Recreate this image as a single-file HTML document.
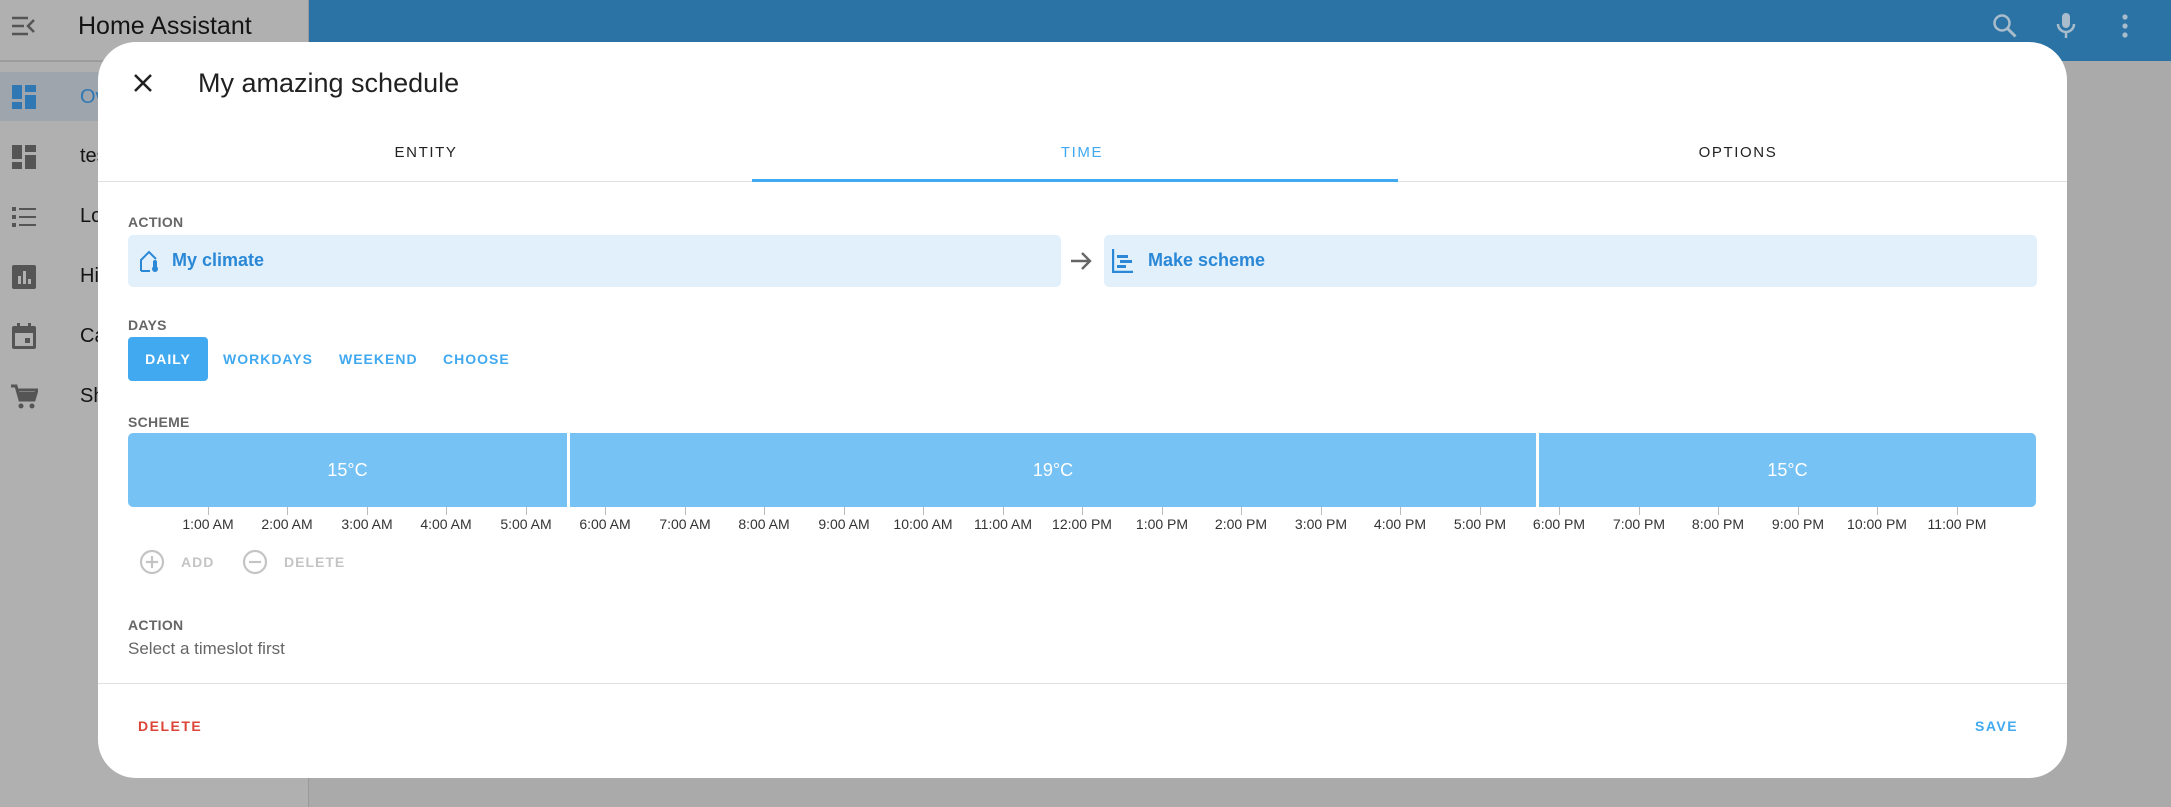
<!DOCTYPE html>
<html><head><meta charset="utf-8"><style>
*{box-sizing:border-box;margin:0;padding:0}
body{width:2171px;height:807px;overflow:hidden;position:relative;background:#aaaaaa;font-family:"Liberation Sans",sans-serif}
.abs{position:absolute}
.side{left:0;top:0;width:309px;height:807px;background:#b0b0b0;border-right:1px solid #9a9a9a}
.top{left:309px;top:0;width:1862px;height:61px;background:#2b73a5}
.item{position:absolute;left:80px;font-size:20px;color:#141414}
.dlg{left:98px;top:42px;width:1969px;height:736px;background:#fff;border-radius:38px;overflow:hidden}
.lbl{position:absolute;left:30px;font-size:14px;font-weight:bold;color:#666;letter-spacing:.3px}
.tab{position:absolute;top:102px;width:656px;text-align:center;font-size:15px;letter-spacing:1.6px;color:#222}
.box{position:absolute;top:193px;height:52px;background:#e1f0fb;border-radius:5px;color:#2a88d6;font-size:18px;font-weight:bold}
.btn{position:absolute;top:295px;height:44px;line-height:44px;font-size:14px;font-weight:bold;letter-spacing:1px;color:#41a9f0}
.seg{position:absolute;top:391px;height:74px;background:#77c2f4;color:#fff;font-size:18px;text-align:center;line-height:74px}
.tk{position:absolute;top:465px;width:1px;height:8px;background:#bbb}
.tl{position:absolute;top:474px;width:90px;margin-left:-45px;text-align:center;font-size:14px;color:#333}
</style></head><body>
<div class="abs side">
 <svg class="abs" style="left:11px;top:15px" width="26" height="22" viewBox="0 0 26 22"><path d="M1 3h16M1 11h12M1 19h16M23 5l-6 6 6 6" stroke="#555" stroke-width="2.5" fill="none"/></svg>
 <div class="abs" style="left:78px;top:12px;font-size:25px;color:#141414">Home Assistant</div>
 <div class="abs" style="left:0;top:60px;width:309px;height:2px;background:#9c9c9c"></div>
 <div class="abs" style="left:0;top:72px;width:309px;height:49px;background:#9ea5ad"></div>
 <svg class="abs" style="left:12px;top:85px" width="24" height="24" viewBox="0 0 24 24"><path d="M0 0h10v14H0zM0 17h10v7H0zM13 0h11v7H13zM13 10h11v14H13z" fill="#2f78b3"/></svg>
 <div class="item" style="top:86px;color:#2f78b3">Ov</div>
 <svg class="abs" style="left:12px;top:145px" width="24" height="24" viewBox="0 0 24 24"><path d="M0 0h10v14H0zM0 17h10v7H0zM13 0h11v7H13zM13 10h11v14H13z" fill="#555"/></svg>
 <div class="item" style="top:145px">tes</div>
 <svg class="abs" style="left:12px;top:206px" width="24" height="22" viewBox="0 0 24 22"><path d="M0 1h4v4H0zM0 9h4v4H0zM0 17h4v4H0zM7 2h17v2H7zM7 10h17v2H7zM7 18h17v2H7z" fill="#555"/></svg>
 <div class="item" style="top:205px">Lo</div>
 <svg class="abs" style="left:12px;top:265px" width="24" height="24" viewBox="0 0 24 24"><rect width="24" height="24" rx="2" fill="#555"/><path d="M6 11h3v8H6zM11 6h3v13h-3zM16 14h3v5h-3z" fill="#b0b0b0"/></svg>
 <div class="item" style="top:265px">Hi</div>
 <svg class="abs" style="left:12px;top:323px" width="24" height="26" viewBox="0 0 24 26"><rect y="3" width="24" height="23" rx="2" fill="#555"/><rect x="3" y="10" width="18" height="13" fill="#b0b0b0"/><rect x="13" y="15" width="5" height="5" fill="#555"/><rect x="5" y="0" width="3" height="5" fill="#555"/><rect x="16" y="0" width="3" height="5" fill="#555"/></svg>
 <div class="item" style="top:325px">Ca</div>
 <svg class="abs" style="left:10px;top:384px" width="28" height="26" viewBox="0 0 28 26"><path d="M1 2h5l4 14h14l3-10H8" stroke="#555" stroke-width="3" fill="none"/><circle cx="11" cy="22" r="2.5" fill="#555"/><circle cx="22" cy="22" r="2.5" fill="#555"/><path d="M9 8h17l-3 8H11z" fill="#555"/></svg>
 <div class="item" style="top:385px">Sh</div>
</div>
<div class="abs top">
 <svg class="abs" style="left:1683px;top:13px" width="26" height="26" viewBox="0 0 26 26"><circle cx="10" cy="10" r="7.5" stroke="#a9bccb" stroke-width="2.5" fill="none"/><path d="M15.5 15.5l8 8" stroke="#a9bccb" stroke-width="3"/></svg>
 <svg class="abs" style="left:1747px;top:12px" width="20" height="28" viewBox="0 0 20 28"><rect x="6" y="1" width="8" height="15" rx="4" fill="#a9bccb"/><path d="M2 12a8 8 0 0 0 16 0M10 20v6" stroke="#a9bccb" stroke-width="2.5" fill="none"/></svg>
 <svg class="abs" style="left:1812px;top:14px" width="8" height="24" viewBox="0 0 8 24"><circle cx="4" cy="3" r="2.6" fill="#a9bccb"/><circle cx="4" cy="12" r="2.6" fill="#a9bccb"/><circle cx="4" cy="21" r="2.6" fill="#a9bccb"/></svg>
</div>
<div class="abs dlg">
 <svg class="abs" style="left:35px;top:31px" width="20" height="20" viewBox="0 0 20 20"><path d="M2 2l16 16M18 2L2 18" stroke="#222" stroke-width="2.6"/></svg>
 <div class="abs" style="left:100px;top:26px;font-size:27px;color:#212121">My amazing schedule</div>
 <div class="tab" style="left:0">ENTITY</div>
 <div class="tab" style="left:656px;color:#41a9f0">TIME</div>
 <div class="tab" style="left:1312px">OPTIONS</div>
 <div class="abs" style="left:0;top:139px;width:1969px;height:1px;background:#e0e0e0"></div>
 <div class="abs" style="left:654px;top:137px;width:646px;height:3px;background:#41a9f0"></div>
 <div class="lbl" style="top:172px">ACTION</div>
 <div class="box" style="left:30px;width:933px">
  <svg class="abs" style="left:10px;top:14px" width="24" height="24" viewBox="0 0 24 24"><path d="M3 22V11l8-8 7 7M3 22h9" stroke="#2a88d6" stroke-width="2" fill="none"/><rect x="15" y="11" width="4" height="9" rx="2" fill="#2a88d6"/><circle cx="17" cy="20" r="3" fill="#2a88d6"/></svg>
  <span class="abs" style="left:44px;top:15px">My climate</span>
 </div>
 <svg class="abs" style="left:972px;top:209px" width="22" height="20" viewBox="0 0 22 20"><path d="M1 10h19M12 2l8 8-8 8" stroke="#666" stroke-width="2.4" fill="none"/></svg>
 <div class="box" style="left:1006px;width:933px">
  <svg class="abs" style="left:8px;top:14px" width="22" height="24" viewBox="0 0 22 24"><path d="M1 0v23h20" stroke="#2a88d6" stroke-width="2.4" fill="none"/><path d="M5 6h11v3H5zM8 11h12v3H8zM5 16h9v3H5z" fill="#2a88d6"/></svg>
  <span class="abs" style="left:44px;top:15px">Make scheme</span>
 </div>
 <div class="lbl" style="top:275px">DAYS</div>
 <div class="btn" style="left:30px;width:80px;background:#41a9f0;color:#fff;border-radius:4px;text-align:center">DAILY</div>
 <div class="btn" style="left:125px">WORKDAYS</div>
 <div class="btn" style="left:241px">WEEKEND</div>
 <div class="btn" style="left:345px">CHOOSE</div>
 <div class="lbl" style="top:372px">SCHEME</div>
 <div class="seg" style="left:30px;width:439px;border-radius:5px 0 0 5px">15°C</div>
 <div class="seg" style="left:472px;width:966px">19°C</div>
 <div class="seg" style="left:1441px;width:497px;border-radius:0 5px 5px 0">15°C</div>
 <svg class="abs" style="left:41px;top:507px" width="26" height="26" viewBox="0 0 26 26"><circle cx="13" cy="13" r="11" stroke="#c4c4c4" stroke-width="2.2" fill="none"/><path d="M13 7v12M7 13h12" stroke="#c4c4c4" stroke-width="2.2"/></svg>
 <div class="abs" style="left:83px;top:512px;font-size:14px;font-weight:bold;color:#c4c4c4;letter-spacing:1px">ADD</div>
 <svg class="abs" style="left:144px;top:507px" width="26" height="26" viewBox="0 0 26 26"><circle cx="13" cy="13" r="11" stroke="#c4c4c4" stroke-width="2.2" fill="none"/><path d="M7 13h12" stroke="#c4c4c4" stroke-width="2.2"/></svg>
 <div class="abs" style="left:186px;top:512px;font-size:14px;font-weight:bold;color:#c4c4c4;letter-spacing:1px">DELETE</div>
 <div class="lbl" style="top:575px">ACTION</div>
 <div class="abs" style="left:30px;top:597px;font-size:17px;color:#666">Select a timeslot first</div>
 <div class="abs" style="left:0;top:641px;width:1969px;height:1px;background:#e0e0e0"></div>
 <div class="abs" style="left:40px;top:676px;font-size:14px;font-weight:bold;color:#db4437;letter-spacing:1.5px">DELETE</div>
 <div class="abs" style="left:1877px;top:676px;font-size:14px;font-weight:bold;color:#41a9f0;letter-spacing:1.5px">SAVE</div>
 <div class="tl" style="left:110px">1:00 AM</div><div class="tk" style="left:110px"></div>
 <div class="tl" style="left:189px">2:00 AM</div><div class="tk" style="left:189px"></div>
 <div class="tl" style="left:269px">3:00 AM</div><div class="tk" style="left:269px"></div>
 <div class="tl" style="left:348px">4:00 AM</div><div class="tk" style="left:348px"></div>
 <div class="tl" style="left:428px">5:00 AM</div><div class="tk" style="left:428px"></div>
 <div class="tl" style="left:507px">6:00 AM</div><div class="tk" style="left:507px"></div>
 <div class="tl" style="left:587px">7:00 AM</div><div class="tk" style="left:587px"></div>
 <div class="tl" style="left:666px">8:00 AM</div><div class="tk" style="left:666px"></div>
 <div class="tl" style="left:746px">9:00 AM</div><div class="tk" style="left:746px"></div>
 <div class="tl" style="left:825px">10:00 AM</div><div class="tk" style="left:825px"></div>
 <div class="tl" style="left:905px">11:00 AM</div><div class="tk" style="left:905px"></div>
 <div class="tl" style="left:984px">12:00 PM</div><div class="tk" style="left:984px"></div>
 <div class="tl" style="left:1064px">1:00 PM</div><div class="tk" style="left:1064px"></div>
 <div class="tl" style="left:1143px">2:00 PM</div><div class="tk" style="left:1143px"></div>
 <div class="tl" style="left:1223px">3:00 PM</div><div class="tk" style="left:1223px"></div>
 <div class="tl" style="left:1302px">4:00 PM</div><div class="tk" style="left:1302px"></div>
 <div class="tl" style="left:1382px">5:00 PM</div><div class="tk" style="left:1382px"></div>
 <div class="tl" style="left:1461px">6:00 PM</div><div class="tk" style="left:1461px"></div>
 <div class="tl" style="left:1541px">7:00 PM</div><div class="tk" style="left:1541px"></div>
 <div class="tl" style="left:1620px">8:00 PM</div><div class="tk" style="left:1620px"></div>
 <div class="tl" style="left:1700px">9:00 PM</div><div class="tk" style="left:1700px"></div>
 <div class="tl" style="left:1779px">10:00 PM</div><div class="tk" style="left:1779px"></div>
 <div class="tl" style="left:1859px">11:00 PM</div><div class="tk" style="left:1859px"></div>
</div>
</body></html>
